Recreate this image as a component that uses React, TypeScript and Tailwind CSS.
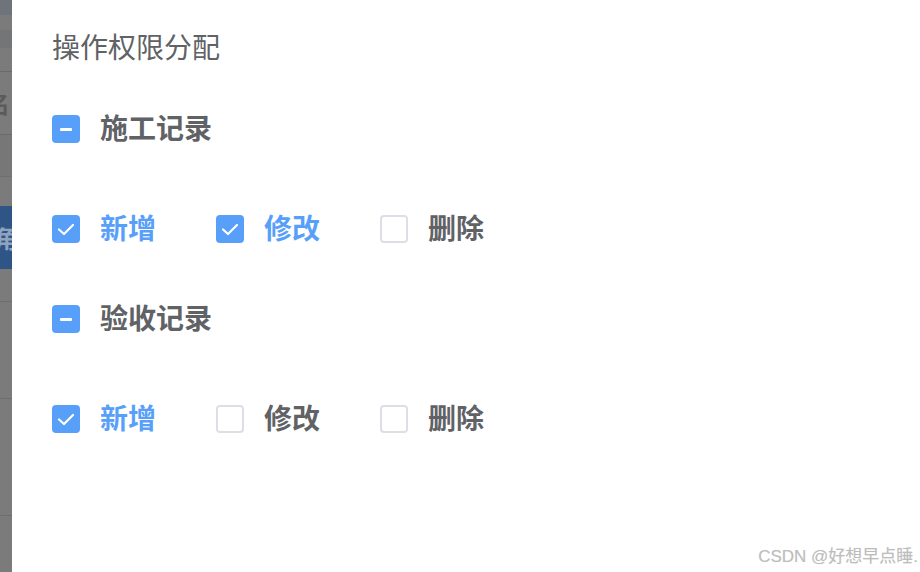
import React from "react";

type Item = { label: string; checked: boolean };
type Group = { title: string; items: Item[] };

const groups: Group[] = [
  {
    title: "施工记录",
    items: [
      { label: "新增", checked: true },
      { label: "修改", checked: true },
      { label: "删除", checked: false },
    ],
  },
  {
    title: "验收记录",
    items: [
      { label: "新增", checked: true },
      { label: "修改", checked: false },
      { label: "删除", checked: false },
    ],
  },
];

function Box({ state }: { state: "checked" | "indeterminate" | "none" }) {
  if (state === "none") {
    return <span className="w-[28px] h-[28px] rounded-[4px] border-2 border-[#dcdfe6] bg-white shrink-0" />;
  }
  return (
    <span className="w-[28px] h-[28px] rounded-[4px] bg-[#589ff9] shrink-0 flex items-center justify-center">
      {state === "checked" ? (
        <svg width="28" height="28" viewBox="0 0 28 28" fill="none">
          <path d="M7 14.5 L12 19 L21 10" stroke="white" strokeWidth="2.2" strokeLinecap="round" strokeLinejoin="round" />
        </svg>
      ) : (
        <span className="w-[12px] h-[3px] bg-white rounded-[1px]" />
      )}
    </span>
  );
}

function Check({ label, checked }: { label: string; checked: boolean }) {
  return (
    <label className="flex items-center gap-[20px] h-[28px]">
      <Box state={checked ? "checked" : "none"} />
      <span
        className={`text-[28px] leading-[28px] pb-[4px] font-semibold ${
          checked ? "text-[#589ff9]" : "text-[#606266]"
        }`}
      >
        {label}
      </span>
    </label>
  );
}

function SideStrip() {
  // 左侧遮罩下露出的页面边缘
  return (
    <div className="w-[12px] h-full bg-[#7b7b7b] flex flex-col overflow-hidden shrink-0">
      <div className="h-[15px] bg-[#6f747a]" />
      <div className="h-[15px]" />
      <div className="h-[18px] bg-[#747577]" />
      <div className="h-[24px] border-b border-[#6a6a6a]" />
      <div className="h-[63px] border-b border-[#6a6a6a] flex items-center">
        <span className="ml-[-14px] text-[24px] leading-none text-[#5b5b5b] font-bold">名</span>
      </div>
      <div className="h-[42px] border-b border-[#707070] bg-[#777]" />
      <div className="h-[29px]" />
      <div className="h-[63px] bg-[#2f5587] flex items-center">
        <span className="ml-[-6px] text-[24px] leading-none text-[#8fa3c0] font-bold">角</span>
      </div>
      <div className="h-[33px] border-b border-[#6e6e6e]" />
      <div className="h-[97px] border-b border-[#6e6e6e]" />
      <div className="h-[117px] border-b border-[#6e6e6e]" />
      <div className="flex-1" />
    </div>
  );
}

export default function App() {
  return (
    <div
      className="w-[920px] h-[572px] flex bg-white overflow-hidden"
      style={{ fontFamily: '"Noto Sans CJK SC", sans-serif' }}
    >
      <SideStrip />
      <div className="flex-1 relative pl-[40px] pt-[32px]">
        <div className="text-[28px] leading-[28px] text-[#606266]">操作权限分配</div>
        <div className="flex flex-col mt-[55px]">
          {groups.map((g, gi) => (
            <div key={g.title} className={gi > 0 ? "mt-[62px]" : ""}>
              <label className="flex items-center gap-[20px] h-[28px]">
                <Box state="indeterminate" />
                <span className="text-[28px] leading-[28px] pb-[4px] font-semibold text-[#606266]">{g.title}</span>
              </label>
              <div className="flex items-center gap-[60px] mt-[72px]">
                {g.items.map((it) => (
                  <Check key={it.label} label={it.label} checked={it.checked} />
                ))}
              </div>
            </div>
          ))}
        </div>
        <div
          className="absolute right-[2px] bottom-[5px] text-[17px] leading-[20px] text-[#bdbdbd]"
          style={{ fontFamily: '"Liberation Sans", "Noto Sans CJK SC", sans-serif', textShadow: "0 0 1px #e5e5e5" }}
        >
          CSDN @好想早点睡.
        </div>
      </div>
    </div>
  );
}
